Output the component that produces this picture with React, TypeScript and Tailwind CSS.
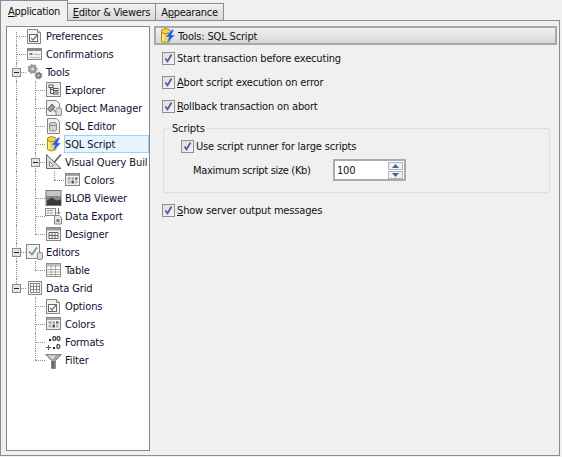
import React from "react";

const G = "#858585";

function Box({ children }: { children: React.ReactNode }) {
  return (
    <svg width="18" height="18" viewBox="0 0 18 18" className="block">
      {children}
    </svg>
  );
}

const scriptIcon = (
  <Box>
    <path d="M2.500 3q4-3 8.500 0v11.500q-4.500 3-8.500 0z" fill="#f6d544" stroke="#a98a1c" />
    <path d="M2.500 5.500q4 2.500 8.500 0" fill="none" stroke="#a98a1c" />
    <path d="M4 7v7" stroke="#fdf2b8" strokeWidth="1.500" />
    <path d="M13 2.500L6.500 10h3.500l-2.500 6.500 8.500-8.500h-3.500l2.500-5.500z" fill="#1f5fe6" stroke="#dfe9ff" strokeWidth="0.400" />
  </Box>
);

const icons: Record<string, React.ReactNode> = {
  pref: (
    <Box>
      <path d="M1.500 2.500h10l3 3v11h-13z" fill="#f2f2f2" stroke={G} />
      <path d="M11.500 2.500v3h3" fill="#ddd" stroke={G} />
      <rect x="3.500" y="7.500" width="8" height="7" fill="#fff" stroke="#666" />
      <path d="M5 11l2 2 4-5" fill="none" stroke="#777" strokeWidth="1.400" />
    </Box>
  ),
  conf: (
    <Box>
      <rect x="1.500" y="3.500" width="14" height="11" fill="#f2f2f2" stroke={G} />
      <rect x="2" y="4" width="13" height="2" fill="#888" />
      <rect x="3.500" y="8" width="3" height="2" fill="#777" />
      <path d="M8 9.500h6M3.500 12.500h10" stroke="#b5b5b5" />
    </Box>
  ),
  tools: (
    <Box>
      <circle cx="6.500" cy="6" r="4" fill="#8d8d8d" stroke="#9a9a9a" strokeWidth="2" strokeDasharray="2 1.300" />
      <circle cx="6.500" cy="6" r="2.800" fill="#a4a4a4" />
      <circle cx="6.500" cy="6" r="1.200" fill="#e8e8e8" />
      <circle cx="12.500" cy="12.500" r="3" fill="#777" stroke="#8a8a8a" strokeWidth="1.800" strokeDasharray="1.600 1.100" />
      <circle cx="12.500" cy="12.500" r="1" fill="#eee" />
    </Box>
  ),
  explorer: (
    <Box>
      <rect x="1.500" y="1.500" width="14" height="14" fill="#eeeeee" stroke={G} />
      <rect x="4" y="4" width="4" height="2.500" fill="#fff" stroke="#555" />
      <rect x="8.500" y="7.500" width="4.500" height="2" fill="#fff" stroke="#555" />
      <rect x="8.500" y="11" width="4.500" height="2" fill="#fff" stroke="#555" />
      <path d="M5.500 6.500v6h3M5.500 8.500h3" fill="none" stroke="#555" />
    </Box>
  ),
  obj: (
    <Box>
      <path d="M1.500 1.500h10l3 3v12h-13z" fill="#f0f0f0" stroke={G} />
      <path d="M2.500 10l4.500-5 3 3-4.500 5z" fill="#999" stroke="#666" />
      <path d="M8 10l2.500 3" stroke="#666" />
      <rect x="11" y="9" width="5.500" height="7.500" rx="1.500" fill="#dcdcdc" stroke="#888" />
    </Box>
  ),
  sqled: (
    <Box>
      <path d="M2.500 1.500h9l3 3v12h-12z" fill="#f0f0f0" stroke={G} />
      <rect x="4.500" y="5.500" width="7" height="8.500" rx="2" fill="#d4d4d4" stroke="#888" />
      <path d="M4.500 8q3.500 1.500 7 0" fill="none" stroke="#888" />
    </Box>
  ),
  script: scriptIcon,
  vqb: (
    <Box>
      <path d="M1.500 1.500v14h14.500z" fill="#dcdcdc" stroke="#666" />
      <path d="M4.500 8.500v4.500h4.500z" fill="#f6f6f6" stroke="#888" />
      <path d="M9 9.500l7-8" stroke="#555" strokeWidth="1.500" />
    </Box>
  ),
  colors: (
    <Box>
      <rect x="1.500" y="2.500" width="14" height="12" fill="#f2f2f2" stroke={G} />
      <rect x="2" y="3" width="13" height="2" fill="#a5a5a5" />
      <path d="M3.500 6.500h3v2h-3zM7.500 6.500h2.500v2H7.500z" fill="#999" />
      <path d="M11 6.500h2.500v2H11zM7.500 9.500h2.500v3H7.500z" fill="#555" />
      <path d="M3.500 9.500h3v3h-3zM11 9.500h2.500v3H11z" fill="#b5b5b5" />
    </Box>
  ),
  blob: (
    <Box>
      <rect x="1" y="1.500" width="15" height="15" fill="#8a8a8a" stroke="#777" />
      <rect x="1.500" y="2" width="14" height="5" fill="#c6c6c6" />
      <path d="M2 11.500l5-3 4 3 5-1v5.500H2z" fill="#3a3a3a" />
    </Box>
  ),
  exp: (
    <Box>
      <rect x="0.500" y="1.500" width="10" height="7" fill="#f4f4f4" stroke={G} />
      <path d="M2 3.500h6M2 6h6" stroke="#999" />
      <path d="M9.500 8.500h5l2 2v6.500h-7z" fill="#e8e8e8" stroke={G} />
      <rect x="11.500" y="12" width="3" height="3" fill="#777" />
      <path d="M13.500 1v6M11.500 5l2 2 2-2" fill="none" stroke="#777" />
    </Box>
  ),
  designer: (
    <Box>
      <rect x="1.500" y="2.500" width="14" height="13" fill="#f4f4f4" stroke={G} />
      <rect x="2" y="3" width="13" height="2.500" fill="#999" />
      <path d="M4 7.500h9v6H4zM4 10.500h9M7 7.500v6M10 7.500v6" fill="#fff" stroke="#666" />
    </Box>
  ),
  editors: (
    <Box>
      <rect x="0.500" y="1.500" width="13" height="14" fill="#f0f0f0" stroke={G} />
      <path d="M3 8.500l3 3 5-7" fill="none" stroke="#888" strokeWidth="1.600" />
      <rect x="11.500" y="9.500" width="5" height="7" rx="1.500" fill="#ddd" stroke="#888" />
    </Box>
  ),
  table: (
    <Box>
      <rect x="1.500" y="2.500" width="14" height="13" fill="#fff" stroke="#909090" />
      <rect x="2" y="3" width="13" height="2.500" fill="#bcbcbc" />
      <path d="M2 8.500h13M2 11h13M2 13.500h13M6 5v10M10.500 5v10" stroke="#a8a8a8" />
    </Box>
  ),
  grid: (
    <Box>
      <rect x="2.500" y="2.500" width="13" height="13" fill="#f4f4f4" stroke="#888" />
      <rect x="4.500" y="4.500" width="9" height="9" fill="#fff" stroke="#888" />
      <path d="M7.500 4.500v9M10.500 4.500v9M4.500 7.500h9M4.500 10.500h9" stroke="#888" />
    </Box>
  ),
  formats: (
    <Box>
      <rect x="4" y="6" width="2" height="2" fill="#222" />
      <text x="7" y="8" fontSize="8" fontWeight="700" fill="#222" fontFamily="'Liberation Sans'">00</text>
      <path d="M1 14.500h5M3.500 12v5" stroke="#555" />
      <rect x="8" y="14" width="2" height="2" fill="#222" />
      <text x="11" y="16" fontSize="8" fontWeight="700" fill="#222" fontFamily="'Liberation Sans'">0</text>
    </Box>
  ),
  filter: (
    <Box>
      <path d="M0.500 3.500h16l-6 6v8h-4v-8z" fill="#a4a4a4" stroke="#888" />
      <path d="M7 10v7h2.500V10z" fill="#666" />
      <path d="M3 4.500h8l-3.500 4z" fill="#dcdcdc" />
    </Box>
  ),
};

type Node = {
  label: string;
  icon: string;
  level: 0 | 1 | 2;
  toggle?: boolean;
  sel?: boolean;
  clip?: boolean;
};

const nodes: Node[] = [
  { label: "Preferences", icon: "pref", level: 0 },
  { label: "Confirmations", icon: "conf", level: 0 },
  { label: "Tools", icon: "tools", level: 0, toggle: true },
  { label: "Explorer", icon: "explorer", level: 1 },
  { label: "Object Manager", icon: "obj", level: 1 },
  { label: "SQL Editor", icon: "sqled", level: 1 },
  { label: "SQL Script", icon: "script", level: 1, sel: true },
  { label: "Visual Query Builder", icon: "vqb", level: 1, toggle: true, clip: true },
  { label: "Colors", icon: "colors", level: 2 },
  { label: "BLOB Viewer", icon: "blob", level: 1 },
  { label: "Data Export", icon: "exp", level: 1 },
  { label: "Designer", icon: "designer", level: 1 },
  { label: "Editors", icon: "editors", level: 0, toggle: true },
  { label: "Table", icon: "table", level: 1 },
  { label: "Data Grid", icon: "grid", level: 0, toggle: true },
  { label: "Options", icon: "pref", level: 1 },
  { label: "Colors", icon: "colors", level: 1 },
  { label: "Formats", icon: "formats", level: 1 },
  { label: "Filter", icon: "filter", level: 1 },
];

const dot = "border-dotted border-[#909090]";

function Guides({ i }: { i: number }) {
  const n = nodes[i];
  const hasLater = () => {
    for (let k = i + 1; k < nodes.length; k++) {
      if (nodes[k].level < 1) return false;
      if (nodes[k].level === 1) return true;
    }
    return false;
  };
  const x = n.level === 0 ? 9 : n.level === 1 ? 28 : 47;
  return (
    <>
      {i < 14 && n.level >= 1 && <span className={`absolute left-[9px] top-0 h-full border-l ${dot}`} />}
      {n.level === 2 && <span className={`absolute left-[28px] top-0 h-full border-l ${dot}`} />}
      {n.level === 0 && (
        <span
          className={`absolute left-[9px] border-l ${dot} ${
            i === 14 ? "top-0 h-[9px]" : i === 0 ? "top-[5px] h-[13px]" : "top-0 h-full"
          }`}
        />
      )}
      {n.level === 1 && (
        <span className={`absolute left-[28px] top-0 border-l ${dot} ${hasLater() ? "h-full" : "h-[9px]"}`} />
      )}
      {n.level === 2 && <span className={`absolute left-[47px] top-0 h-[9px] border-l ${dot}`} />}
      <span className={`absolute top-[9px] w-[10px] border-t ${dot}`} style={{ left: x }} />
      {n.toggle && (
        <span
          className="absolute top-[5px] flex h-[9px] w-[9px] items-center justify-center border border-[#8a8a8a] bg-[#e4e4e4]"
          style={{ left: x - 4 }}
        >
          <span className="h-px w-[5px] bg-[#222]" />
        </span>
      )}
    </>
  );
}

function Row({ i }: { i: number }) {
  const n = nodes[i];
  const indent = n.level === 0 ? "pl-[19px]" : n.level === 1 ? "pl-[38px]" : "pl-[57px]";
  return (
    <div className={`relative flex h-[18px] items-center ${indent}`}>
      <Guides i={i} />
      <span className="relative z-10 w-[18px] shrink-0">{icons[n.icon]}</span>
      <span
        className={`relative z-10 ml-px flex h-[18px] items-center whitespace-nowrap ${
          n.sel ? "w-[85px] border border-[#99d1ff] bg-[#e8f4fd]" : "px-px"
        } ${n.clip ? "w-[83px] overflow-hidden" : ""}`}
      >
        {n.label}
      </span>
    </div>
  );
}

function Check({ label, className = "" }: { label: React.ReactNode; className?: string }) {
  return (
    <div className={`flex items-center ${className}`}>
      <span className="flex h-[13px] w-[13px] shrink-0 items-center justify-center border border-[#8e8f8f] bg-gradient-to-br from-[#dcdcdc] to-[#f6f6f6]">
        <svg width="11" height="11" viewBox="0 0 11 11">
          <path d="M2.500 5.500l2 3 4-7" fill="none" stroke="#4a5f97" strokeWidth="1.700" />
        </svg>
      </span>
      <span className="ml-[2px] whitespace-nowrap">{label}</span>
    </div>
  );
}

function U({ children }: { children: React.ReactNode }) {
  return <span className="underline underline-offset-1">{children}</span>;
}

export default function App() {
  return (
    <div className="flex h-[457px] w-[562px] flex-col overflow-hidden bg-[#f0f0f0] pr-[2px] pb-px font-['DejaVu_Sans_Condensed','DejaVu_Sans',sans-serif] text-[11px] leading-[13px] tracking-[-0.17px] text-[#111]">
      <div className="relative z-10 flex h-[20px] shrink-0 items-end whitespace-nowrap tracking-[-0.3px]">
        <div className="-mb-px flex h-[21px] w-[68px] items-center justify-center border border-b-0 border-[#898c95] bg-[#f0f0f0]">
          <span><U>A</U>pplication</span>
        </div>
        <div className="flex h-[17px] w-[88px] items-center justify-center border-r border-t border-[#898c95] bg-gradient-to-b from-[#f2f2f2] to-[#d8d8d8]">
          <span><U>E</U>ditor &amp; Viewers</span>
        </div>
        <div className="flex h-[17px] w-[68px] items-center justify-center border-r border-t border-[#898c95] bg-gradient-to-b from-[#f2f2f2] to-[#d8d8d8]">
          <span>A<U>p</U>pearance</span>
        </div>
      </div>
      <div className="flex min-h-0 flex-1 gap-[4px] border border-[#898c95] bg-[#f0f0f0] pt-[5px] pr-[2px] pb-[4px] pl-[5px]">
        <div className="h-full w-[144px] shrink-0 overflow-hidden border border-[#828790] bg-white tracking-[-0.12px] text-[#101030]">
          {nodes.map((_, i) => (
            <Row key={i} i={i} />
          ))}
        </div>
        <div className="min-w-0 flex-1">
          <div className="flex h-[19px] items-center border-2 border-[#a8a8a8] bg-gradient-to-b from-[#f1f1f1] to-[#d8d8d8] pl-[3px]">
            {scriptIcon}
            <span className="ml-[1px] mt-[2px]">Tools: SQL Script</span>
          </div>
          <div className="pl-[8px]">
            <Check className="mt-px h-[24px]" label="Start transaction before executing" />
            <Check className="h-[24px]" label={<><U>A</U>bort script execution on error</>} />
            <Check className="h-[24px]" label={<><U>R</U>ollback transaction on abort</>} />
            <fieldset className="ml-px mr-[7px] mt-[4px] h-[71px] rounded-[3px] border border-[#d5dfe5]">
              <legend className="ml-[6px] px-[2px]">Scripts</legend>
              <Check className="ml-[17px] mt-[3px] h-[16px]" label="Use script runner for large scripts" />
              <div className="ml-[29px] mt-[5px] flex items-center">
                <span className="w-[140px] whitespace-nowrap tracking-[-0.33px]">Maximum script size (Kb)</span>
                <div className="flex h-[22px] w-[73px] items-center border-2 border-[#ababab] bg-white pl-[2px] pr-px">
                  <span className="flex-1">100</span>
                  <span className="flex w-[15px] flex-col gap-px">
                    <span className="flex h-[8px] items-center justify-center border border-[#a9b7c9] bg-[#eef2f7]">
                      <svg width="7" height="4" viewBox="0 0 7 4"><path d="M3.500 0L7 4H0z" fill="#4d6185" /></svg>
                    </span>
                    <span className="flex h-[8px] items-center justify-center border border-[#a9b7c9] bg-[#eef2f7]">
                      <svg width="7" height="4" viewBox="0 0 7 4"><path d="M0 0h7L3.500 4z" fill="#4d6185" /></svg>
                    </span>
                  </span>
                </div>
              </div>
            </fieldset>
            <Check className="mt-[5px] h-[24px]" label={<><U>S</U>how server output messages</>} />
          </div>
        </div>
      </div>
    </div>
  );
}
